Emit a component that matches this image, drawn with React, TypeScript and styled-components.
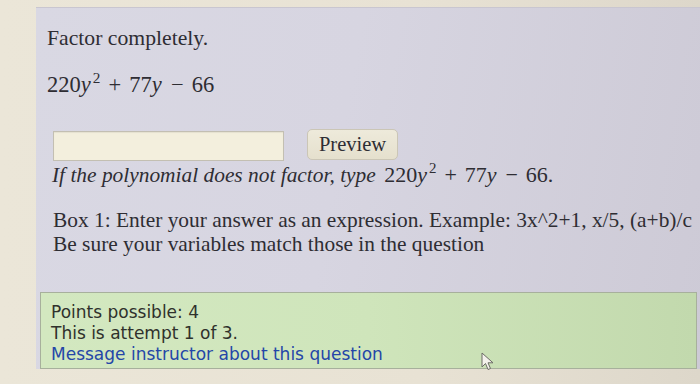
import React from "react";
import styled, { createGlobalStyle } from "styled-components";

const Global = createGlobalStyle`
  html, body { margin: 0; padding: 0; }
  body {
    width: 700px;
    height: 384px;
    overflow: hidden;
    background: #e6e0d1;
  }
`;

const Page = styled.div`
  position: relative;
  width: 700px;
  height: 384px;
  padding: 7px 0 0 36px;
  box-sizing: border-box;
  background: linear-gradient(90deg, #ebe6d8 0%, #e8e2d4 60%, #ddd7ca 100%);
`;

const Panel = styled.div`
  display: flex;
  flex-direction: column;
  background: linear-gradient(100deg, #d9d8e3 0%, #d7d5e1 45%, #cdcad6 100%);
  border-top: 1px solid #c9c6d0;
`;

const Question = styled.div`
  display: flex;
  flex-direction: column;
  padding: 18px 6px 36px 11px;
  font-family: "Liberation Serif", "Times New Roman", serif;
  color: #2e2d33;
`;

const Prompt = styled.div`
  font-size: 21.7px;
  line-height: 24px;
`;

const MathLine = styled.div<{ $top?: number }>`
  font-family: "Liberation Serif", serif;
  font-size: 22.5px;
  line-height: 24px;
  margin-top: ${(p) => p.$top ?? 0}px;
  white-space: nowrap;
`;

const Var = styled.i`
  font-style: italic;
  margin-right: 1px;
`;

const Sup = styled.sup`
  font-size: 0.68em;
  vertical-align: 0;
  position: relative;
  top: -0.6em;
  margin-left: 1px;
`;

const Op = styled.span`
  margin: 0 0.36em;
`;

const AnswerRow = styled.div`
  display: flex;
  align-items: center;
  gap: 23px;
  margin: 32px 0 0 6px;
`;

const AnswerInput = styled.div`
  width: 229px;
  height: 28px;
  background: #f3efdd;
  border: 1px solid #c3bfb2;
  box-shadow: inset 0 1px 1px rgba(0, 0, 0, 0.06);
`;

const PreviewButton = styled.button`
  width: 91px;
  height: 31px;
  margin-top: -4px;
  background: linear-gradient(180deg, #eeeadb 0%, #e5e0cd 100%);
  border: 1px solid #cbc6b6;
  border-radius: 5px;
  font-family: "Liberation Serif", serif;
  font-size: 20.5px;
  color: #2e2d33;
  padding: 0;
`;

const Hint = styled.div`
  font-size: 21.4px;
  line-height: 24px;
  margin: 2px 0 0 5px;
  white-space: nowrap;
`;

const HintText = styled.em`
  font-style: italic;
`;

const InlinePoly = styled.span`
  font-style: normal;
  font-size: 22px;
  margin-left: 3px;
`;

const Instructions = styled.div`
  font-size: 21.4px;
  line-height: 24px;
  margin: 19px 0 0 6px;
  white-space: nowrap;
`;

const Footer = styled.div`
  margin: 0 3px 0 4px;
  padding: 9px 6px 3px 10px;
  background: linear-gradient(90deg, #d3e8c0 0%, #cfe5bb 50%, #c2d9ad 100%);
  border: 1px solid #a7b09c;
  font-family: "DejaVu Sans", Verdana, sans-serif;
  font-size: 17px;
  line-height: 21px;
  color: #2f312c;
`;

const FooterLine = styled.div`
  white-space: nowrap;
`;

const InstructorLink = styled.a`
  color: #2446a8;
  text-decoration: none;
`;

const Cursor = styled.svg`
  position: absolute;
  left: 481px;
  top: 352px;
`;

const PolyParts = ({ period }: { period?: boolean }) => (
  <>
    220<Var>y</Var>
    <Sup>2</Sup>
    <Op>+</Op>77<Var>y</Var>
    <Op>−</Op>66{period ? "." : ""}
  </>
);

export default function App() {
  return (
    <>
      <Global />
      <Page>
        <Panel>
          <Question>
            <Prompt>Factor completely.</Prompt>
            <MathLine $top={23}>
              <PolyParts />
            </MathLine>
            <AnswerRow>
              <AnswerInput />
              <PreviewButton>Preview</PreviewButton>
            </AnswerRow>
            <Hint>
              <HintText>If the polynomial does not factor, type</HintText>
              <InlinePoly>
                {" "}
                <PolyParts period />
              </InlinePoly>
            </Hint>
            <Instructions>
              Box 1: Enter your answer as an expression. Example: 3x^2+1, x/5, (a+b)/c
              <br />
              Be sure your variables match those in the question
            </Instructions>
          </Question>
          <Footer>
            <FooterLine>Points possible: 4</FooterLine>
            <FooterLine>This is attempt 1 of 3.</FooterLine>
            <FooterLine>
              <InstructorLink href="#">Message instructor about this question</InstructorLink>
            </FooterLine>
          </Footer>
        </Panel>
        <Cursor width="14" height="20" viewBox="0 0 14 20">
          <path
            d="M1 1 L1 15 L4.5 11.5 L7 17.5 L9.5 16.5 L7 10.8 L12 10.8 Z"
            fill="#f4f2ec"
            stroke="#6c6c66"
            strokeWidth="1"
            strokeLinejoin="round"
          />
        </Cursor>
      </Page>
    </>
  );
}
